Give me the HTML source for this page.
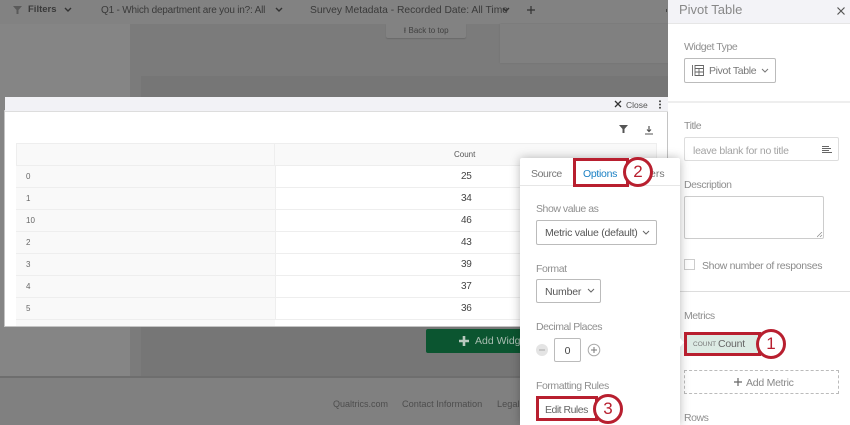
<!DOCTYPE html>
<html><head><meta charset="utf-8"><style>
*{box-sizing:border-box}
html,body{margin:0;padding:0;width:850px;height:425px;overflow:hidden;background:#808080}
body{font-family:"Liberation Sans",sans-serif;position:relative}
#w{position:absolute;left:0;top:0;width:850px;height:425px;overflow:hidden;filter:blur(.3px)}
.a{position:absolute;white-space:nowrap}
.t{position:absolute;white-space:nowrap;line-height:14px}
.r{position:absolute;border:3px solid #b81f2f}
.c{position:absolute;width:30px;height:30px;border-radius:50%;border:3px solid #b81f2f;background:#fff;color:#b81f2f;font-size:17px;line-height:24px;text-align:center}
.sel{position:absolute;background:#fff;border:1px solid #bbb;border-radius:2px}
.lab{font-size:10.5px;letter-spacing:-.45px;color:#8f8f8f}
.rowl{position:absolute;left:16px;width:259px;height:22px;background:#f9f9f9;border-bottom:1px solid #eee;font-size:8px;color:#666;line-height:22px;padding-left:10px}
.rowr{position:absolute;left:275px;width:382px;height:22px;background:#fff;border-bottom:1px solid #eee;border-left:1px solid #eee;font-size:10px;letter-spacing:-.3px;color:#444;line-height:22px;padding-left:185px}
</style></head><body><div id="w">
<div class="a" style="left:0;top:0;width:668px;height:24px;background:#828282"></div>
<div class="a" style="left:0;top:24px;width:130px;height:353px;background:#858585"></div>
<div class="a" style="left:130px;top:24px;width:538px;height:353px;background:#7b7b7b"></div>
<div class="a" style="left:141px;top:76px;width:527px;height:300px;background:#767676"></div>
<div class="a" style="left:500px;top:24px;width:168px;height:39px;background:#808080;box-shadow:0 0 1px #6a6a6a"></div>
<div class="a" style="left:386px;top:24px;width:80px;height:14px;background:#828282;border-radius:0 0 2px 2px;box-shadow:0 1px 1px #6a6a6a;font-size:8px;color:#404040;text-align:center;line-height:13px">⭱ Back to top</div>
<div class="a" style="left:0;top:376px;width:668px;height:49px;background:#808080;border-top:2px solid #6e6e6e"></div>

<svg class="a" style="left:13px;top:6px" width="10" height="9"><path d="M0 0H9L5.5 4V8L3.5 8V4Z" fill="#5a5a5a"/></svg>
<div class="t" style="left:28px;top:3px;font-size:9.5px;font-weight:bold;color:#3a3a3a">Filters</div>
<svg class="a" style="left:64px;top:7px" width="8" height="6"><path d="M1 1L4 4L7 1" fill="none" stroke="#333" stroke-width="1.4"/></svg>
<div class="t" style="left:101px;top:4px;font-size:10px;letter-spacing:-.2px;color:#3a3a3a">Q1 - Which department are you in?: All</div>
<svg class="a" style="left:275px;top:7px" width="8" height="6"><path d="M1 1L4 4L7 1" fill="none" stroke="#333" stroke-width="1.4"/></svg>
<div class="t" style="left:310px;top:4px;font-size:10.3px;color:#3a3a3a">Survey Metadata - Recorded Date: All Time</div>
<svg class="a" style="left:502px;top:7px" width="8" height="6"><path d="M1 1L4 4L7 1" fill="none" stroke="#333" stroke-width="1.4"/></svg>
<svg class="a" style="left:526px;top:5px" width="10" height="10"><path d="M5 1V9M1 5H9" stroke="#333" stroke-width="1.2"/></svg>
<div class="a" style="left:666px;top:9px;width:1px;height:3px;background:#444"></div>

<!-- Modal -->
<div class="a" style="left:4px;top:110px;width:664px;height:217px;background:#fff;border:1px solid #c4c4c4;border-top:0"></div>
<div class="a" style="left:5px;top:97px;width:663px;height:15px;background:#f2f2f6;border-bottom:1px solid #ddd"></div>
<svg class="a" style="left:614px;top:100px" width="8" height="8"><path d="M1 1L7 7M7 1L1 7" stroke="#333" stroke-width="1.3"/></svg>
<div class="t" style="left:626px;top:98px;font-size:8.5px;color:#555;line-height:14px">Close</div>
<svg class="a" style="left:658px;top:100px" width="4" height="10"><circle cx="2" cy="1.2" r="1" fill="#444"/><circle cx="2" cy="4.5" r="1" fill="#444"/><circle cx="2" cy="7.8" r="1" fill="#444"/></svg>
<svg class="a" style="left:619px;top:125px" width="10" height="9"><path d="M0 0H9L5.5 4V8L3.5 8V4Z" fill="#555"/></svg>
<svg class="a" style="left:644px;top:126px" width="10" height="9"><path d="M5 0V5M3 3.5L5 5.5L7 3.5" fill="none" stroke="#555" stroke-width="1.2"/><path d="M1 8H9" stroke="#555"/></svg>

<div class="a" style="left:16px;top:143px;width:259px;height:23px;background:#f9f9f9;border:1px solid #eee"></div>
<div class="a" style="left:275px;top:143px;width:382px;height:23px;background:#f9f9f9;border:1px solid #eee;border-left:0;font-size:8px;color:#555;line-height:22px;padding-left:179px">Count</div>
<div class="rowl" style="top:166px">0</div><div class="rowr" style="top:166px">25</div>
<div class="rowl" style="top:188px">1</div><div class="rowr" style="top:188px">34</div>
<div class="rowl" style="top:210px">10</div><div class="rowr" style="top:210px">46</div>
<div class="rowl" style="top:232px">2</div><div class="rowr" style="top:232px">43</div>
<div class="rowl" style="top:254px">3</div><div class="rowr" style="top:254px">39</div>
<div class="rowl" style="top:276px">4</div><div class="rowr" style="top:276px">37</div>
<div class="rowl" style="top:298px">5</div><div class="rowr" style="top:298px">36</div>
<div class="a" style="left:16px;top:320px;width:259px;height:6px;background:#f9f9f9"></div>

<!-- Add widget -->
<div class="a" style="left:426px;top:329px;width:100px;height:24px;background:#0b5530;border-radius:2px"></div>
<svg class="a" style="left:458px;top:335px" width="12" height="12"><path d="M6 1V11M1 6H11" stroke="#b9c9bf" stroke-width="2.6"/></svg>
<div class="t" style="left:475px;top:334px;font-size:10.5px;color:#a9bdb1">Add Widget</div>

<!-- Footer -->
<div class="t" style="left:333px;top:397px;font-size:9px;color:#4d4d4d">Qualtrics.com</div>
<div class="t" style="left:402px;top:397px;font-size:9.2px;color:#4d4d4d">Contact Information</div>
<div class="t" style="left:497px;top:397px;font-size:9.2px;color:#4d4d4d">Legal</div>

<!-- Right panel -->
<div class="a" style="left:668px;top:0;width:182px;height:425px;background:#fff"></div>
<div class="a" style="left:668px;top:0;width:182px;height:24px;background:#f3f3f7;border-bottom:1px solid #e6e6e6"></div>
<div class="t" style="left:679px;top:3px;font-size:13px;color:#888">Pivot Table</div>
<svg class="a" style="left:836px;top:6px" width="10" height="10"><path d="M1.5 1.5L8.5 8.5M8.5 1.5L1.5 8.5" stroke="#555" stroke-width="1.2"/></svg>
<div class="t lab" style="left:684px;top:40px">Widget Type</div>
<div class="sel" style="left:684px;top:58px;width:92px;height:25px"></div>
<svg class="a" style="left:692px;top:65px" width="12" height="11"><path d="M.5 0V11M3 .5H11.5M3 3.5H11.5M3 7H11.5M3 10.5H11.5M3 0V11M7 3V11M11.5 0V11" fill="none" stroke="#666" stroke-width=".9"/></svg>
<div class="t" style="left:709px;top:64px;font-size:10.5px;letter-spacing:-.36px;color:#777">Pivot Table</div>
<svg class="a" style="left:761px;top:68px" width="8" height="6"><path d="M1 1L4 4L7 1" fill="none" stroke="#777"/></svg>
<div class="a" style="left:668px;top:101px;width:182px;height:2px;background:#eee"></div>
<div class="t lab" style="left:684px;top:119px">Title</div>
<div class="sel" style="left:684px;top:137px;width:155px;height:24px;border-color:#ddd"></div>
<div class="t" style="left:693px;top:144px;font-size:10.5px;letter-spacing:-.27px;color:#a3a3a3">leave blank for no title</div>
<svg class="a" style="left:822px;top:146px" width="10" height="8"><path d="M0 .5H7M0 2.5H9M0 4.5H7M0 6.5H10" stroke="#666"/></svg>
<div class="t lab" style="left:684px;top:178px">Description</div>
<div class="sel" style="left:684px;top:196px;width:140px;height:43px;border-color:#ccc"></div>
<svg class="a" style="left:817px;top:232px" width="6" height="6"><path d="M0 5L5 0M3 5L5 3" stroke="#888" stroke-width=".7"/></svg>
<div class="a" style="left:684px;top:259px;width:11px;height:11px;border:1px solid #ccc"></div>
<div class="t" style="left:702px;top:259px;font-size:10.5px;letter-spacing:-.32px;color:#8a8a8a">Show number of responses</div>
<div class="a" style="left:668px;top:291px;width:182px;height:1px;background:#ddd"></div>
<div class="t lab" style="left:684px;top:309px">Metrics</div>
<div class="a" style="left:684px;top:332px;width:82px;height:24px;background:#dcebe4"></div>
<div class="t" style="left:693px;top:338px;font-size:6.5px;color:#777">COUNT</div>
<div class="t" style="left:718px;top:337px;font-size:10.5px;letter-spacing:-.2px;color:#666">Count</div>
<div class="a" style="left:684px;top:370px;width:155px;height:24px;border:1px dashed #bbb"></div>
<svg class="a" style="left:733px;top:377px" width="10" height="10"><path d="M5 1V9M1 5H9" stroke="#666" stroke-width="1.2"/></svg>
<div class="t" style="left:746px;top:376px;font-size:10.5px;letter-spacing:-.25px;color:#888">Add Metric</div>
<div class="t lab" style="left:684px;top:411px">Rows</div>

<!-- Popup -->
<div class="a" style="left:520px;top:158px;width:160px;height:267px;background:#fff;box-shadow:0 0 10px rgba(0,0,0,.28);border-radius:2px 2px 0 0"></div>
<svg class="a" style="left:680px;top:338px" width="4" height="9"><path d="M0 0L4 4.5L0 9Z" fill="#fff"/></svg>
<div class="a" style="left:520px;top:185px;width:160px;height:1px;background:#e6e6e6"></div>
<div class="t" style="left:531px;top:167px;font-size:10.5px;letter-spacing:-.4px;color:#777">Source</div>
<div class="t" style="left:583px;top:167px;font-size:10.5px;letter-spacing:-.3px;color:#1a80c4">Options</div>
<div class="t" style="left:650px;top:167px;font-size:10.5px;color:#777">ers</div>
<div class="t lab" style="left:536px;top:202px">Show value as</div>
<div class="sel" style="left:536px;top:220px;width:121px;height:25px"></div>
<div class="t" style="left:545px;top:226px;font-size:10.5px;letter-spacing:-.25px;color:#555">Metric value (default)</div>
<svg class="a" style="left:642px;top:230px" width="8" height="6"><path d="M1 1L4 4L7 1" fill="none" stroke="#666"/></svg>
<div class="t lab" style="left:536px;top:262px">Format</div>
<div class="sel" style="left:536px;top:279px;width:65px;height:24px"></div>
<div class="t" style="left:545px;top:285px;font-size:10.5px;letter-spacing:-.2px;color:#555">Number</div>
<svg class="a" style="left:587px;top:288px" width="8" height="6"><path d="M1 1L4 4L7 1" fill="none" stroke="#666"/></svg>
<div class="t lab" style="left:536px;top:320px">Decimal Places</div>
<svg class="a" style="left:535px;top:343px" width="14" height="14"><circle cx="7" cy="7" r="6" fill="#e4e4e4"/><path d="M4 7H10" stroke="#aaa"/></svg>
<div class="sel" style="left:554px;top:338px;width:27px;height:24px;text-align:center;font-size:10.5px;color:#444;line-height:24px">0</div>
<svg class="a" style="left:587px;top:343px" width="14" height="14"><circle cx="7" cy="7" r="5.8" fill="none" stroke="#aaa"/><path d="M4 7H10M7 4V10" stroke="#777"/></svg>
<div class="t lab" style="left:536px;top:379px">Formatting Rules</div>
<div class="t" style="left:545px;top:403px;font-size:10.5px;letter-spacing:-.5px;color:#666">Edit Rules</div>

<!-- Annotations -->
<div class="r" style="left:684px;top:332px;width:77px;height:24px"></div>
<div class="c" style="left:756px;top:329px">1</div>
<div class="r" style="left:573px;top:158px;width:56px;height:29px"></div>
<div class="c" style="left:623px;top:157px">2</div>
<div class="r" style="left:536px;top:396px;width:62px;height:25px"></div>
<div class="c" style="left:593px;top:394px">3</div>
</div></body></html>
